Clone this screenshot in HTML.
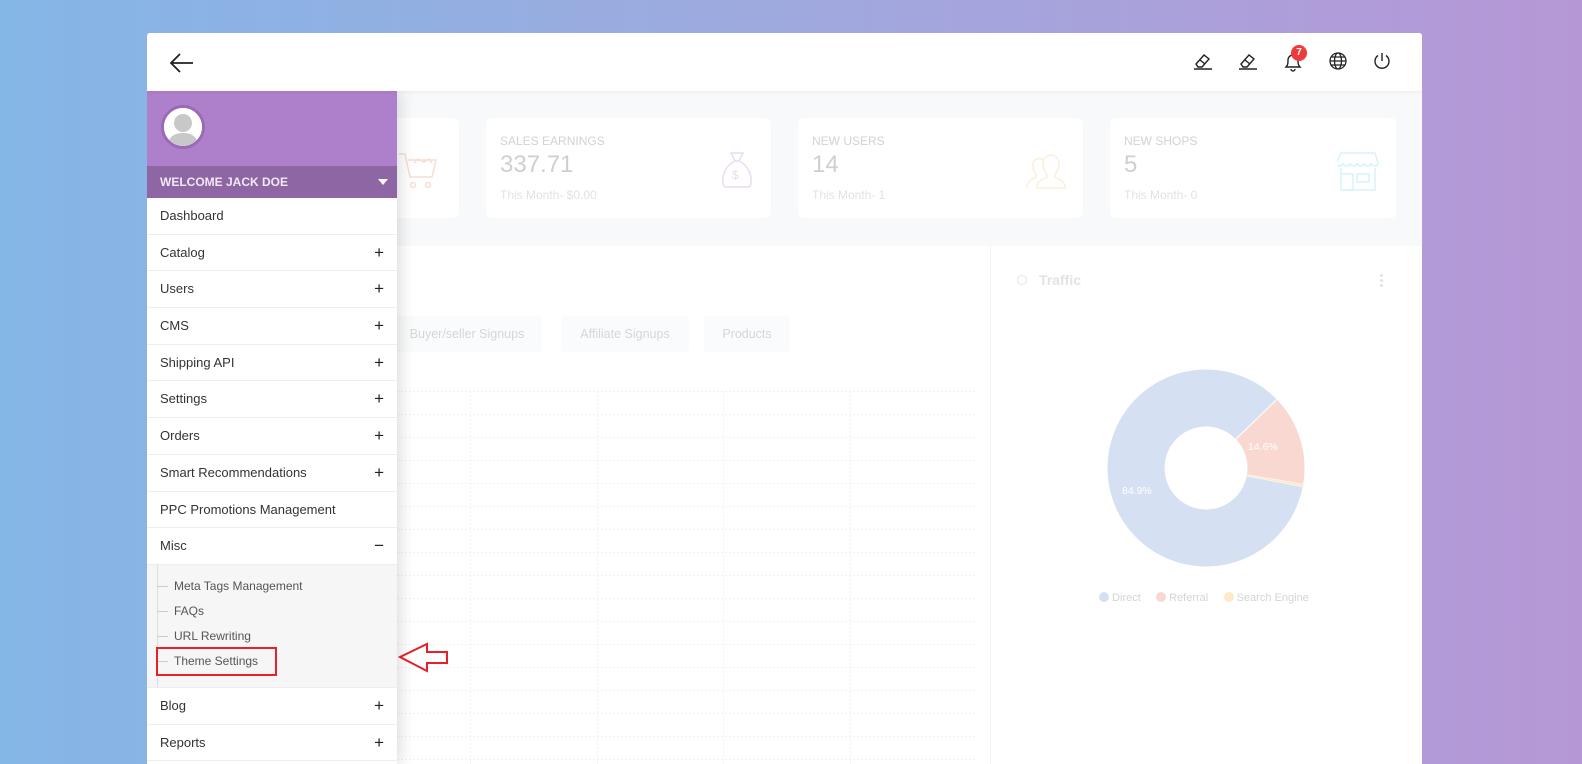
<!DOCTYPE html>
<html><head><meta charset="utf-8"><style>
*{margin:0;padding:0;box-sizing:border-box}
body{width:1582px;height:764px;overflow:hidden;background:linear-gradient(90deg,#84b6e6 0%,#9fa9de 50%,#b697d6 100%);font-family:"Liberation Sans",Arial,sans-serif;position:relative}
.win{position:absolute;left:147px;top:33px;width:1275px;height:731px;background:#fff;border-radius:3px 3px 0 0;overflow:hidden}
.hdr{position:absolute;left:0;top:0;width:1275px;height:58px;background:#fff;box-shadow:0 1px 4px rgba(0,0,0,.06);z-index:3}
.content{position:absolute;left:0;top:58px;width:1275px;height:673px;background:#fff}
.top{position:absolute;left:0;top:0;width:1275px;height:155px;background:#f8f9fb}
.card{position:absolute;top:27px;height:100px;background:#fff;border-radius:5px}
.card .t{position:absolute;left:14px;top:16px;font-size:12px;color:#d2d2d2}
.card .n{position:absolute;left:14px;top:33px;font-size:24px;color:#cfcfcf}
.card .m{position:absolute;left:14px;top:70px;font-size:12px;color:#e2e2e2}
.side{position:absolute;left:0;top:58px;width:250px;height:673px;background:#fff;z-index:2;box-shadow:4px 0 14px rgba(0,0,0,.13)}
.pur{height:75px;background:#ae7fca;position:relative}
.av{position:absolute;left:14px;top:14px;width:44px;height:44px;border-radius:50%;background:#fff;border:3px solid #9a6ab5;overflow:hidden}
.wel{height:32px;background:#8d66a3;color:#f1e8f6;font-size:12px;font-weight:bold;line-height:32px;padding-left:13px;position:relative}
.it{height:36.7px;line-height:36px;border-bottom:1px solid #eee;font-size:13px;color:#333;padding-left:13px;position:relative}
.it b{position:absolute;right:13px;top:0;font-weight:normal;font-size:17px;color:#222}
.sub{background:#f6f6f6;height:123px;position:relative;border-bottom:1px solid #eee}
.sub div{position:absolute;left:27px;font-size:12px;color:#555}
.sub i{position:absolute;left:10px;width:11px;height:1px;background:#ccc}
.tab{position:absolute;top:225px;height:36px;background:#fafbfc;border-radius:4px;font-size:12.5px;color:#d6d6d6;line-height:36px;text-align:center}
</style></head><body>
<div class="win">
 <div class="hdr">
  <svg style="position:absolute;left:22px;top:19px" width="26" height="22" viewBox="0 0 26 22"><path d="M24 11H2M11 2L2 11l9 9" fill="none" stroke="#222" stroke-width="1.8"/></svg>
  <svg style="position:absolute;left:1045px;top:17px" width="22" height="22" viewBox="0 0 22 22"><g fill="none" stroke="#222" stroke-width="1.4"><path d="M4 14l8-9 5 4-7 8H6z"/><path d="M8 10l5 4"/><path d="M2 19h18"/></g></svg>
  <svg style="position:absolute;left:1090px;top:17px" width="22" height="22" viewBox="0 0 22 22"><g fill="none" stroke="#222" stroke-width="1.4"><path d="M4 14l8-9 5 4-7 8H6z"/><path d="M8 10l5 4"/><path d="M2 19h18"/></g></svg>
  <svg style="position:absolute;left:1135px;top:18px" width="22" height="22" viewBox="0 0 22 22"><g fill="none" stroke="#222" stroke-width="1.4"><path d="M4 16c2-2 2-4 2-7a5 5 0 0 1 10 0c0 3 0 5 2 7z"/><path d="M9 18a2 2 0 0 0 4 0"/></g></svg>
  <div style="position:absolute;left:1144px;top:12px;width:16px;height:16px;border-radius:50%;background:#ef3a3a;color:#fff;font-size:10px;font-weight:bold;text-align:center;line-height:16px">7</div>
  <svg style="position:absolute;left:1180px;top:17px" width="22" height="22" viewBox="0 0 22 22"><g fill="none" stroke="#222" stroke-width="1.3"><circle cx="11" cy="11" r="8"/><ellipse cx="11" cy="11" rx="3.5" ry="8"/><path d="M3 11h16M4.5 7h13M4.5 15h13"/></g></svg>
  <svg style="position:absolute;left:1224px;top:17px" width="22" height="22" viewBox="0 0 22 22"><g fill="none" stroke="#222" stroke-width="1.4"><path d="M11 3v8"/><path d="M7 5.5a7 7 0 1 0 8 0"/></g></svg>
 </div>
 <div class="content">
  <div class="top">
   <div class="card" style="left:220px;width:92px"><svg style="position:absolute;left:30px;top:33px" width="44" height="40" viewBox="0 0 44 40"><g fill="none" stroke="#f8ddd2" stroke-width="1.5"><path d="M2 3h6l5 23h22l4-17H11"/><circle cx="16" cy="34" r="2.5"/><circle cx="31" cy="34" r="2.5"/><path d="M17 12l4-4 6 3 5-3 3 4"/></g></svg></div>
   <div class="card" style="left:339px;width:285px"><div class="t">SALES EARNINGS</div><div class="n">337.71</div><div class="m">This Month- $0.00</div>
    <svg style="position:absolute;left:234px;top:32px" width="34" height="40" viewBox="0 0 34 40"><g fill="none" stroke="#eadcf2" stroke-width="1.5"><path d="M11 3h12l-4 8h-4z"/><path d="M15 11C5 16 2 26 3 33q0 4 4 4h20q4 0 4-4c1-7-2-17-12-22"/><text x="12" y="29" font-size="12" fill="#eadcf2" stroke="none" font-family="Liberation Sans">$</text></g></svg></div>
   <div class="card" style="left:651px;width:285px"><div class="t">NEW USERS</div><div class="n">14</div><div class="m">This Month- 1</div>
    <svg style="position:absolute;left:227px;top:33px" width="44" height="40" viewBox="0 0 44 40"><g fill="none" stroke="#fcefd9" stroke-width="1.5"><path d="M2 37c0-8 6-9 9-11v-3c-3-2-3-6-3-10a6 6 0 0 1 10-4"/><path d="M12 37c0-8 7-9 10-11v-3c-3-3-4-7-4-11a8 8 0 0 1 16 0c0 4-1 8-4 11v3c3 2 10 3 10 11z"/></g></svg></div>
   <div class="card" style="left:963px;width:286px"><div class="t">NEW SHOPS</div><div class="n">5</div><div class="m">This Month- 0</div>
    <svg style="position:absolute;left:227px;top:34px" width="42" height="40" viewBox="0 0 42 40"><g fill="none" stroke="#d6f2fb" stroke-width="1.5"><path d="M4 1h34l3 10c0 4-6 4-7 0c0 4-6 4-7 0c0 4-6 4-7 0c0 4-6 4-7 0c0 4-6 4-7 0c0 4-6 4-7 0z"/><path d="M4 16v22h34V16"/><path d="M4 38h12V22H4M20 22h12v8H20z"/></g></svg></div>
  </div>
  <div style="position:absolute;left:843px;top:155px;width:1px;height:518px;background:#f4f4f4"></div>
  <div class="tab" style="left:245px;width:150px">Buyer/seller Signups</div>
  <div class="tab" style="left:414px;width:128px">Affiliate Signups</div>
  <div class="tab" style="left:557px;width:86px">Products</div>
  <svg style="position:absolute;left:250px;top:290px" width="585" height="383">
   <g stroke="#f1f1f1" stroke-dasharray="2 2" stroke-width="1">
    <path d="M0 10.5H580M0 33.5H580M0 56.5H580M0 79.5H580M0 102.5H580M0 125.5H580M0 148.5H580M0 171.5H580M0 194.5H580M0 217.5H580M0 240.5H580M0 263.5H580M0 286.5H580M0 309.5H580M0 332.5H580M0 355.5H580M0 378.5H580"/>
    <path d="M73.5 10V383M200.5 10V383M326.5 10V383M453.5 10V383"/>
   </g></svg>
  <svg style="position:absolute;left:868px;top:182px" width="14" height="14"><circle cx="7" cy="7" r="4.5" fill="none" stroke="#eee" stroke-width="1.5"/></svg>
  <div style="position:absolute;left:892px;top:181px;font-size:14px;font-weight:bold;color:#e2e2e2">Traffic</div>
  <div style="position:absolute;left:1233px;top:183px;width:4px">
   <div style="width:3px;height:3px;border-radius:50%;background:#e2e2e2;margin-bottom:2px"></div><div style="width:3px;height:3px;border-radius:50%;background:#e2e2e2;margin-bottom:2px"></div><div style="width:3px;height:3px;border-radius:50%;background:#e2e2e2"></div></div>
  <svg style="position:absolute;left:949px;top:267px" width="220" height="220" viewBox="-110 -110 220 220">
   <path d="M97.2 18.7A99 99 0 1 1 71.2 -68.8L29.5 -28.5A41 41 0 1 0 40.3 7.8Z" fill="#d5e0f3" stroke="#fff" stroke-width="1"/>
   <path d="M71.2 -68.8A99 99 0 0 1 97.6 16.5L40.4 6.8A41 41 0 0 0 29.5 -28.5Z" fill="#f8d8d1" stroke="#fff" stroke-width="1"/>
   <path d="M97.6 16.5A99 99 0 0 1 97.2 18.7L40.3 7.8A41 41 0 0 0 40.4 6.8Z" fill="#fde9c8"/>
   <text x="-84" y="26" font-size="10.5" fill="#fff" font-family="Liberation Sans">84.9%</text>
   <text x="42" y="-18" font-size="10.5" fill="#fff" font-family="Liberation Sans">14.6%</text>
  </svg>
  <div style="position:absolute;left:952px;top:501px;font-size:11px;color:#d4d4d4;white-space:nowrap">
   <span style="display:inline-block;width:10px;height:10px;border-radius:50%;background:#d5e0f3;vertical-align:-1px"></span> Direct &nbsp;&nbsp;&nbsp;
   <span style="display:inline-block;width:10px;height:10px;border-radius:50%;background:#f8d8d1;vertical-align:-1px"></span> Referral &nbsp;&nbsp;&nbsp;
   <span style="display:inline-block;width:10px;height:10px;border-radius:50%;background:#fde9c8;vertical-align:-1px"></span> Search Engine</div>
 </div>
 <div class="side">
  <div class="pur"><div class="av"><svg width="38" height="38" viewBox="0 0 38 38"><rect width="38" height="38" fill="#fff"/><circle cx="19" cy="15" r="9" fill="#c8c8c8"/><path d="M3 38c2-10 8-13 16-13s14 3 16 13z" fill="#c8c8c8"/></svg></div></div>
  <div class="wel">WELCOME JACK DOE<svg style="position:absolute;right:9px;top:13px" width="10" height="6"><path d="M0 0h10L5 6z" fill="#fff"/></svg></div>
  <div class="it">Dashboard</div>
  <div class="it">Catalog<b>+</b></div>
  <div class="it">Users<b>+</b></div>
  <div class="it">CMS<b>+</b></div>
  <div class="it">Shipping API<b>+</b></div>
  <div class="it">Settings<b>+</b></div>
  <div class="it">Orders<b>+</b></div>
  <div class="it">Smart Recommendations<b>+</b></div>
  <div class="it">PPC Promotions Management</div>
  <div class="it">Misc<b>−</b></div>
  <div class="sub">
   <span style="position:absolute;left:10px;top:0;width:1px;height:122px;background:#ddd"></span>
   <i style="top:21px"></i><div style="top:14px">Meta Tags Management</div>
   <i style="top:46px"></i><div style="top:39px">FAQs</div>
   <i style="top:71px"></i><div style="top:64px">URL Rewriting</div>
   <i style="top:96px"></i><div style="top:89px">Theme Settings</div>
   <span style="position:absolute;left:9px;top:82px;width:121px;height:29px;border:2px solid #e8202a"></span>
  </div>
  <div class="it">Blog<b>+</b></div>
  <div class="it">Reports<b>+</b></div>
 </div>
</div>
<svg style="position:absolute;left:397px;top:641px" width="56" height="32"><path d="M3 16L30 3v8h20v11H30v8z" fill="none" stroke="#e8202a" stroke-width="2"/></svg>
</body></html>
